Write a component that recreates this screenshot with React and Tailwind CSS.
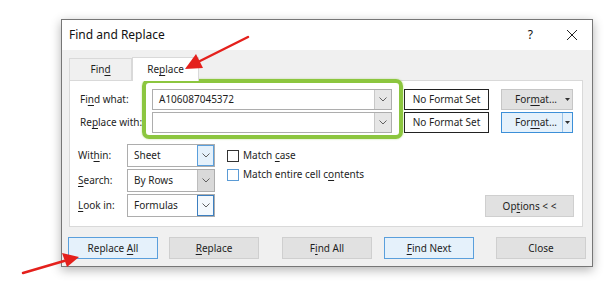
import React from 'react';

const font = { fontFamily: '"Noto Sans", "Open Sans", sans-serif' };

const Key = ({ children }) => <span className="underline underline-offset-2">{children}</span>;

const Chevron = ({ color = '#606060' }) => (
  <svg width="8" height="5" viewBox="0 0 8 5">
    <polyline points="0.5,0.5 4,4 7.5,0.5" fill="none" stroke={color} strokeWidth="1" />
  </svg>
);

const Combo = ({ value, width, height = 'h-[21px]', btn = 'bg-[#e6e6e6] border-l border-[#c8c8c8]' }) => (
  <div className={`flex ${height} ${width} border border-[#adadad] bg-white`}>
    <div className="flex-1 flex items-center pl-[6px] text-[10px] text-[#1e1e1e]">{value}</div>
    <div className={`w-[17px] flex items-center justify-center ${btn}`}>
      <Chevron />
    </div>
  </div>
);

const FormatButton = ({ active }) => (
  <div
    className={`flex h-[21px] w-[72px] items-center border text-[10px] text-[#1e1e1e] ${
      active ? 'bg-[#e5f1fb] border-[#3c8fd8]' : 'bg-[#e1e1e1] border-[#c6c6c6]'
    }`}
  >
    <div className="flex-1 text-center pl-[8px]">
      <span>
        For<Key>m</Key>at...
      </span>
    </div>
    <div className={`w-[10px] h-full flex items-center justify-center ${active ? 'border-l border-[#9cc4e8]' : ''}`}>
      <svg width="5" height="3" viewBox="0 0 5 3">
        <polygon points="0,0 5,0 2.5,3" fill="#333" />
      </svg>
    </div>
  </div>
);

const Button = ({ children, active, className = '' }) => (
  <div
    className={`h-[22px] w-[90px] flex items-center justify-center border text-[10px] text-[#1e1e1e] ${
      active ? 'bg-[#e5f1fb] border-[#5a9fdc]' : 'bg-[#e1e1e1] border-[#cfcfcf]'
    } ${className}`}
  >
    <span>{children}</span>
  </div>
);

const Checkbox = ({ children, blue }) => (
  <div className="flex items-center h-[19px] gap-[4px] text-[10px] text-[#1e1e1e]">
    <div className={`w-[12px] h-[12px] border bg-white ${blue ? 'border-[#5b9bd5]' : 'border-[#333333]'}`} />
    <span>{children}</span>
  </div>
);

const Label = ({ children, w }) => (
  <div className={`${w} text-[10px] text-[#1e1e1e]`}>
    <span>{children}</span>
  </div>
);

export default function App() {
  return (
    <div className="relative w-[612px] h-[283px] bg-white overflow-hidden pl-[61px] pt-[19px]" style={font}>
      <div className="w-[532px] h-[248px] border border-[#767676] bg-[#f0f0f0] shadow-[0_3px_10px_rgba(0,0,0,0.3)] flex flex-col">
        {/* title bar */}
        <div className="h-[30px] bg-white flex items-center pl-[7px] pr-[14px] text-[#111]">
          <span className="text-[12px]">Find and Replace</span>
          <span className="ml-auto text-[12px] mr-[33px]">?</span>
          <svg width="12" height="12" viewBox="0 0 12 12">
            <path d="M1 1 L11 11 M11 1 L1 11" stroke="#222" strokeWidth="1" />
          </svg>
        </div>

        {/* tabs */}
        <div className="flex items-end pl-[7px] pt-[7px] h-[30px]">
          <div className="w-[63px] h-[22px] border border-b-0 border-[#d9d9d9] flex items-center justify-center text-[10px] text-[#1e1e1e]">
            <span>
              Fin<Key>d</Key>
            </span>
          </div>
          <div className="relative z-10 -mb-px w-[67px] h-[24px] border border-b-0 border-[#d9d9d9] bg-white flex items-center justify-center text-[10px] text-[#1e1e1e]">
            <span>
              Re<Key>p</Key>lace
            </span>
          </div>
        </div>

        {/* panel */}
        <div className="ml-[7px] w-[514px] h-[147px] border border-[#d9d9d9] bg-white pt-[8px] pr-[8px] flex flex-col">
          <div className="flex flex-col gap-[2px] pl-[10px]">
            <div className="flex items-center h-[21px]">
              <Label w="w-[72px]">
                Fi<Key>n</Key>d what:
              </Label>
              <Combo value="A106087045372" width="w-[240px]" />
              <div className="ml-[12px] w-[85px] h-[21px] border border-[#222] flex items-center justify-center text-[10px] text-[#1e1e1e]">
                No Format Set
              </div>
              <div className="ml-[12px]">
                <FormatButton />
              </div>
            </div>
            <div className="flex items-center h-[21px]">
              <Label w="w-[72px]">
                Re<Key>p</Key>lace with:
              </Label>
              <Combo value="" width="w-[240px]" />
              <div className="ml-[12px] w-[85px] h-[21px] border border-[#222] flex items-center justify-center text-[10px] text-[#1e1e1e]">
                No Format Set
              </div>
              <div className="ml-[12px]">
                <FormatButton active />
              </div>
            </div>
          </div>

          <div className="flex mt-[11px] pl-[8px]">
            <div className="flex flex-col gap-[2px]">
              <div className="flex items-center">
                <Label w="w-[49px]">
                  Wit<Key>h</Key>in:
                </Label>
                <Combo value="Sheet" width="w-[88px]" height="h-[23px]" btn="bg-[#e5f1fb] border border-[#5a9fdc]" />
              </div>
              <div className="flex items-center">
                <Label w="w-[49px]">
                  <Key>S</Key>earch:
                </Label>
                <Combo value="By Rows" width="w-[88px]" height="h-[23px]" btn="bg-[#d9d9d9] border-l border-[#bdbdbd]" />
              </div>
              <div className="flex items-center">
                <Label w="w-[49px]">
                  <Key>L</Key>ook in:
                </Label>
                <Combo value="Formulas" width="w-[88px]" height="h-[23px]" btn="bg-[#f4f9fd] border border-[#3c7fc0]" />
              </div>
            </div>
            <div className="ml-[12px] pt-[2px] flex flex-col">
              <Checkbox>
                Match <Key>c</Key>ase
              </Checkbox>
              <Checkbox blue>
                Match entire cell c<Key>o</Key>ntents
              </Checkbox>
            </div>
            <div className="ml-auto self-end">
              <div className="h-[22px] w-[89px] flex items-center justify-center border bg-[#e1e1e1] border-[#cfcfcf] text-[10px] text-[#1e1e1e]">
                <span>
                  Op<Key>t</Key>ions &lt; &lt;
                </span>
              </div>
            </div>
          </div>
        </div>

        {/* bottom buttons */}
        <div className="flex pl-[6px] pt-[10px]">
          <Button active>
            Replace <Key>A</Key>ll
          </Button>
          <Button className="ml-[11px]">
            <Key>R</Key>eplace
          </Button>
          <Button className="ml-[23px] w-[89px]">
            F<Key>i</Key>nd All
          </Button>
          <Button active className="ml-[12px]">
            <Key>F</Key>ind Next
          </Button>
          <Button className="ml-[22px] w-[89px]">Close</Button>
        </div>
      </div>

      {/* green highlight */}
      <div className="absolute left-[142px] top-[79px] w-[261px] h-[60px] border-4 border-[#8cc63f] rounded-[7px] shadow-[0_0_2px_rgba(140,198,63,0.6)]" />

      {/* red arrows */}
      <svg className="absolute left-0 top-0 z-20" width="612" height="283" viewBox="0 0 612 283">
        <line x1="248" y1="37" x2="200" y2="61" stroke="#e4201c" strokeWidth="2.5" strokeLinecap="round" />
        <polygon points="185,69 203,68 196,54" fill="#e4201c" />
        <line x1="23" y1="273" x2="64" y2="261" stroke="#e4201c" strokeWidth="2.5" strokeLinecap="round" />
        <polygon points="79,257 67,267 62,253" fill="#e4201c" />
      </svg>
    </div>
  );
}
